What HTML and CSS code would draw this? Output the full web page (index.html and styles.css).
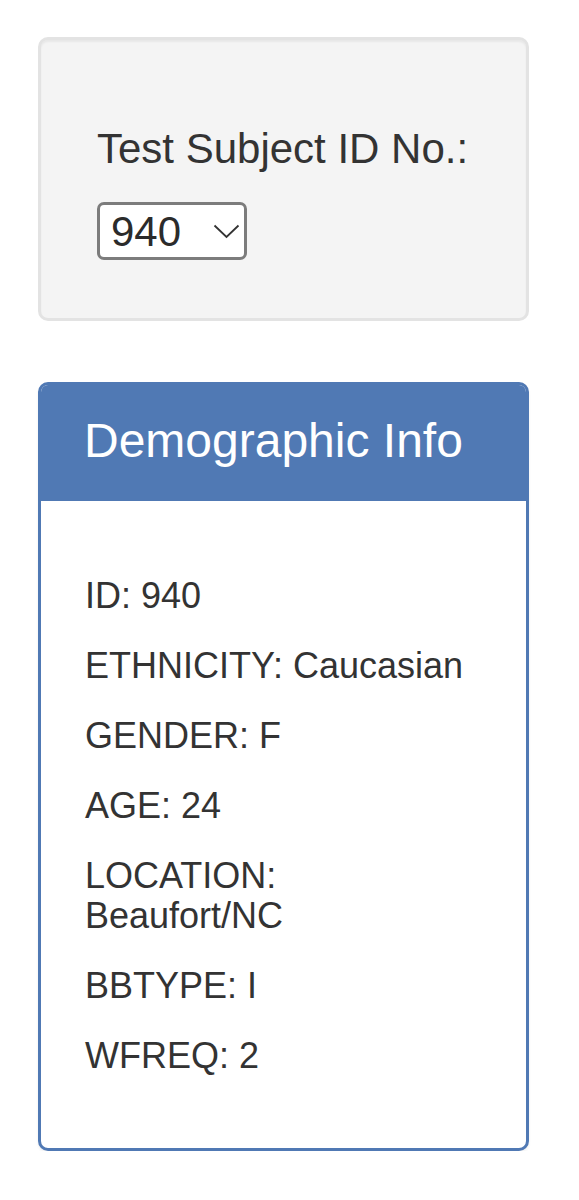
FILE: index.html
```html
<!DOCTYPE html>
<html lang="en">
<head>
<meta charset="utf-8">
<title>Demographic Info</title>
<link rel="stylesheet" href="styles.css">
</head>
<body>
<div class="page">
  <div class="well">
    <label class="field-label" for="selDataset">Test Subject ID No.:</label>
    <div class="select-wrap">
      <select id="selDataset" class="subject-select">
        <option>940</option>
      </select>
      <svg class="chevron" width="28" height="15" viewBox="0 0 28 15" aria-hidden="true">
        <polyline points="1.5,1.5 13.5,13 25.5,1.5" fill="none" stroke="#333" stroke-width="1.8"/>
      </svg>
    </div>
  </div>

  <div class="panel">
    <div class="panel-heading">
      <h3 class="panel-title">Demographic Info</h3>
    </div>
    <div class="panel-body">
      <p class="info">ID: 940</p>
      <p class="info">ETHNICITY: Caucasian</p>
      <p class="info">GENDER: F</p>
      <p class="info">AGE: 24</p>
      <p class="info">LOCATION: Beaufort/NC</p>
      <p class="info">BBTYPE: I</p>
      <p class="info">WFREQ: 2</p>
    </div>
  </div>
</div>
</body>
</html>
```

FILE: styles.css
```css
* { box-sizing: border-box; }

html, body {
  margin: 0;
  padding: 0;
  background: #ffffff;
}

body {
  font-family: "Liberation Sans", Arial, Helvetica, sans-serif;
  color: #333333;
}

.page {
  width: 491px;
  margin-left: 38px;
  padding-top: 37px;
}

.well {
  background: #f4f4f4;
  border: 3px solid #e3e3e3;
  border-radius: 10px;
  box-shadow: inset 0 2px 2px rgba(0, 0, 0, 0.05);
  padding: 86px 36px 58px 56px;
}

.field-label {
  display: block;
  font-size: 42px;
  line-height: 46px;
  font-weight: normal;
  color: #333333;
  margin: 0 0 30px 0;
}

.select-wrap {
  position: relative;
  display: inline-block;
  width: 150px;
  height: 58px;
}

.subject-select {
  -webkit-appearance: none;
  appearance: none;
  display: block;
  width: 150px;
  height: 58px;
  margin: 0;
  padding: 0 0 0 11px;
  border: 3px solid #7c7c7c;
  border-radius: 7px;
  background: #ffffff;
  font-family: "Liberation Sans", Arial, Helvetica, sans-serif;
  font-size: 42px;
  color: #2b2b2b;
  outline: none;
}

.chevron {
  position: absolute;
  left: 116px;
  top: 22px;
  pointer-events: none;
}

.panel {
  margin-top: 61px;
  border: 3px solid #5079b4;
  border-radius: 10px;
  background: #ffffff;
  box-shadow: 0 2px 3px rgba(0, 0, 0, 0.06);
  overflow: hidden;
}

.panel-heading {
  background: #5079b4;
  padding: 29px 42px 34px 43px;
}

.panel-title {
  margin: 0;
  font-size: 48px;
  line-height: 53px;
  font-weight: normal;
  color: #ffffff;
}

.panel-body {
  display: flex;
  flex-direction: column;
  gap: 30px;
  padding: 75px 48px 72px 44px;
}

.info {
  margin: 0;
  font-size: 36px;
  line-height: 40px;
  color: #333333;
}
```
